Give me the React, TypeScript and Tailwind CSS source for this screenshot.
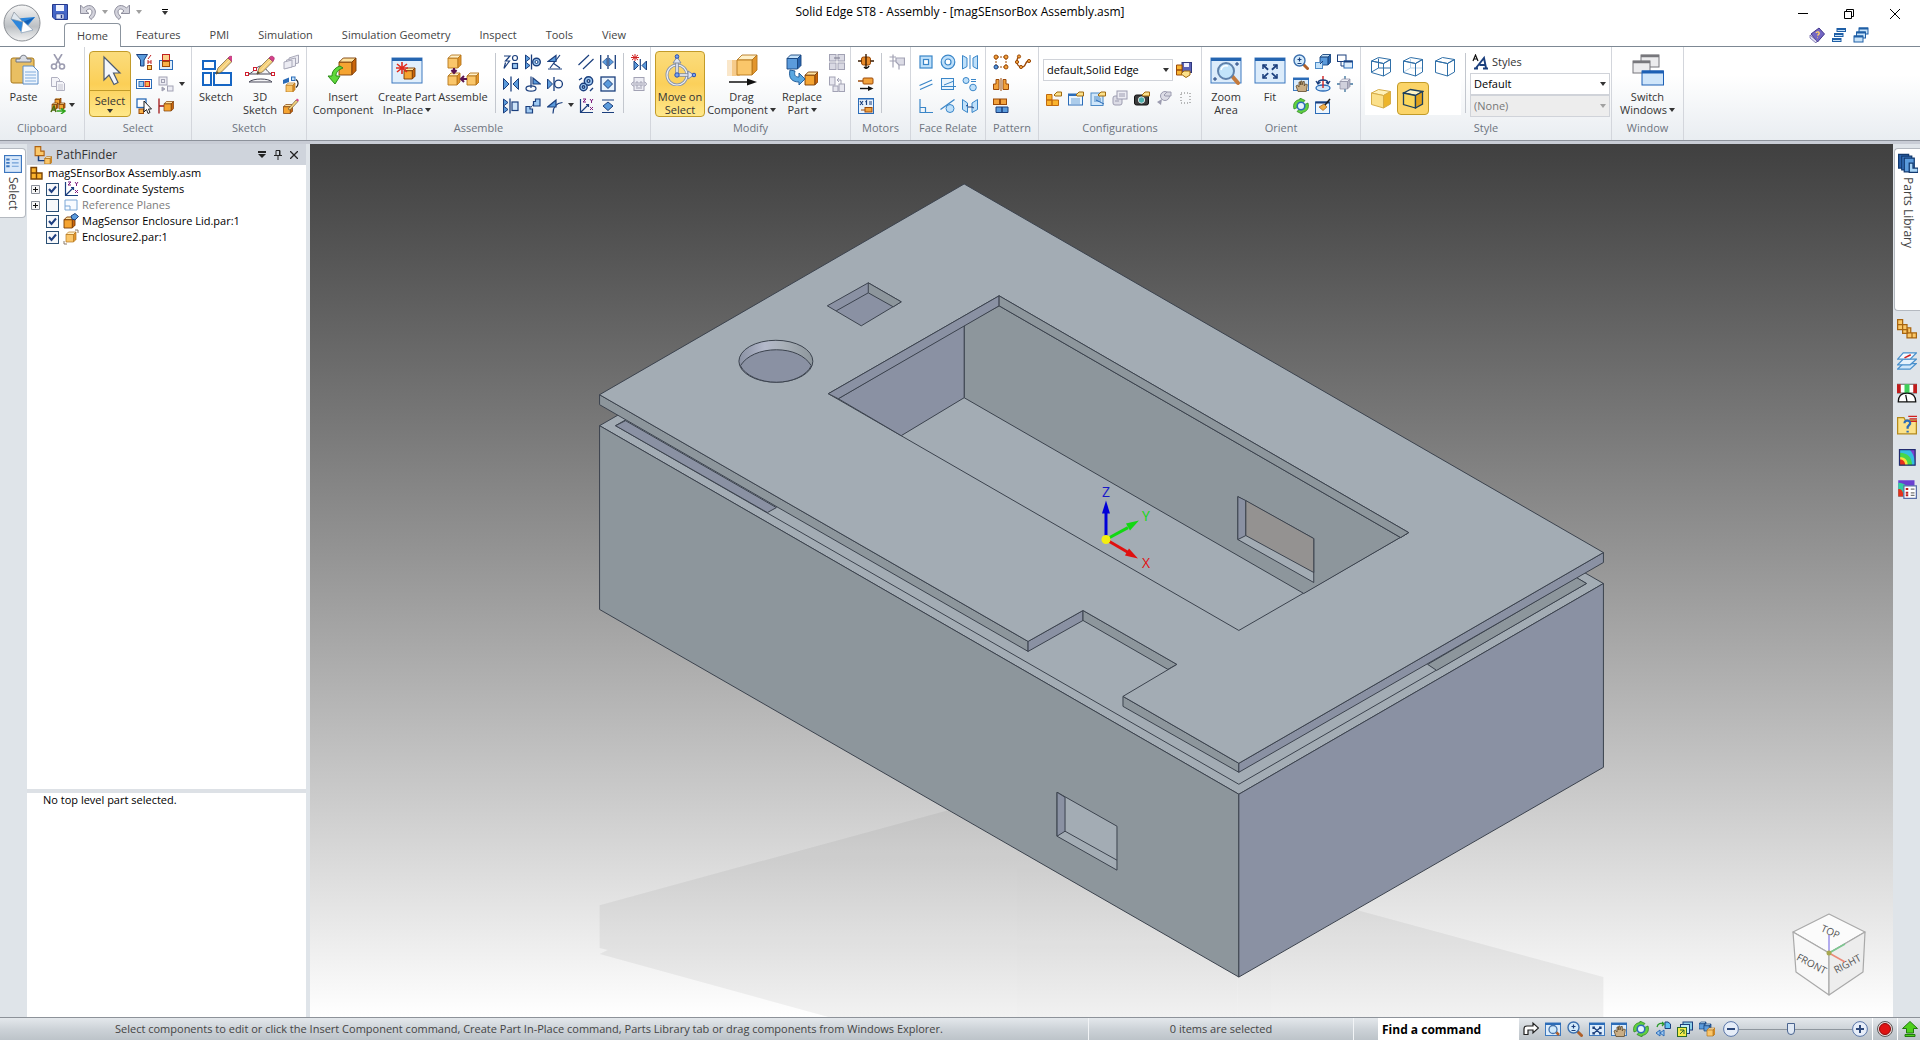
import type { ReactNode } from "react";

const NAVY = "#1b3f7d";
const BLUE = "#2b6cb8";
const SKY = "#bfe0fa";
const GRAY = "#9c9cb0";
const RUST = "#9c4a08";

type CubeProps = { x: number; y: number; s: number; tone?: "orange" | "gold" | "blue" | "gray" };

const tones = {
    orange: ["#ffe3a0", "#f5a431", "#c9660c", "#7c3c06"],
    gold: ["#fff0c8", "#fac66a", "#e2952c", "#b5761c"],
    blue: ["#c4e2fa", "#5b9bdc", "#2a66b0", "#17457f"],
    gray: ["#ededf4", "#d0d0dc", "#b3b3c4", "#8e8ea4"],
};

function Cube({ x, y, s, tone = "orange" }: CubeProps) {
    const [top, front, side, line] = tones[tone];
    const d = s * 0.25;
    const f = s - d;
    return (
        <g stroke={line} strokeWidth={s > 10 ? 0.9 : 0.7} strokeLinejoin="round">
            <path d={`M${x} ${y + d}l${d} ${-d}h${f}l${-d} ${d}z`} fill={top} />
            <path d={`M${x + f} ${y + d}l${d} ${-d}v${f}l${-d} ${d}z`} fill={side} />
            <path d={`M${x} ${y + d}h${f}v${f}h${-f}z`} fill={front} />
        </g>
    );
}

function Pencil({ x, y }: { x: number; y: number }) {
    return (
        <g transform={`translate(${x} ${y})`} stroke="#6d5a3a" strokeWidth="0.7">
            <path d="M0 17l2-6L12 1l4 3.500L5.500 15z" fill="#f4cf7a" />
            <path d="M12 1l1.500-1.500c2-1 4.500 1 3.500 3L16 4.500z" fill="#d6408c" stroke="#a02560" />
            <path d="M0 17l.8-2.600 1.800 1.500z" fill="#333" />
            <path d="M4 13.500L14 3" stroke="#fff0c0" />
        </g>
    );
}

const win = (
    <>
        <rect x="0.500" y="2" width="15" height="12.500" fill="#dcecfb" stroke="#3d79bf" />
        <path d="M0 3h16" stroke="#2b6cb8" strokeWidth="2" />
    </>
);
const tag = <path d="M8 5l3-3h4.500v4H9z" fill="#fbe08a" stroke="#a06a10" />;
const grayTag = <path d="M8 5l3-3h4v4H9z" fill="#d8d8e2" stroke={GRAY} />;

const glyphs: Record<string, ReactNode> = {
    save: (
        <>
            <path d="M.5 .5h15v15H3L.5 13z" fill="#4667c8" stroke="#26398c" />
            <rect x="4" y="1" width="8" height="6" fill="#f2f5ff" />
            <rect x="4" y="10" width="8" height="5" fill="#dfe5f8" stroke="#26398c" strokeWidth=".6" />
            <path d="M9.500 11v3" stroke="#26398c" strokeWidth="1.500" />
        </>
    ),
    undo: <path d="M.5 1v8.500H9L6 7c3-3.500 6-2 6 1 0 2-2 4-3 5l2 2.500c4-3 5-7 4-9.500C13 1 8 0 3.500 4z" fill="#d3d3dc" stroke="#8f8f9e" />,
    redo: <path d="M15.500 1v8.500H7L10 7C7 3.500 4 5 4 8c0 2 2 4 3 5l-2 2.500C1 12.500 0 8.500 1 6 3 1 8 0 12.500 4z" fill="#d3d3dc" stroke="#8f8f9e" />,
    help: (
        <>
            <path d="M2 7l8-6 5.500 6-7 8z" fill="#7467c4" stroke="#42368c" />
            <path d="M1 8v3l6 5 1-2z" fill="#e8e6f8" stroke="#42368c" strokeWidth=".6" />
            <path d="M7 6c1-2 4-1 3 1L8.500 8.500M8 10.500h.6" fill="none" stroke="#ffce66" strokeWidth="1.400" />
        </>
    ),
    stack: (
        <g fill="#c9e3f8" stroke="#1f5fa6">
            <rect x="6" y="1.500" width="8.500" height="3" />
            <rect x="3.500" y="6.500" width="8.500" height="3" />
            <rect x="1.500" y="11.500" width="8.500" height="3" />
            <path d="M6 2h9M3 7h9M1 12h9" strokeWidth="2" />
        </g>
    ),
    cascade: (
        <g fill="#c9e3f8" stroke="#1f5fa6">
            <rect x="6" y="1" width="9" height="6" />
            <rect x="3.500" y="5" width="9" height="6" />
            <rect x="1" y="9" width="9" height="6" />
            <path d="M6 1.500h9M3.500 5.500h9M1 9.500h9" strokeWidth="1.800" />
        </g>
    ),
    cut: (
        <g fill="none" stroke={GRAY} strokeWidth="1.600">
            <path d="M4 0l6 10M12 0L6 10" />
            <circle cx="4" cy="12.500" r="2.500" />
            <circle cx="12" cy="12.500" r="2.500" />
        </g>
    ),
    copy: (
        <g fill="#f4f4f8" stroke="#b0b0c0">
            <path d="M1.500 1.500h6l2 2v7h-8z" />
            <path d="M6.500 5.500h6l2 2v7h-8z" />
            <path d="M8 9h5M8 11h5M8 13h5" strokeWidth=".7" />
        </g>
    ),
    pasteRel: (
        <>
            <Cube x={5} y={0} s={6} />
            <Cube x={2} y={5} s={6} />
            <Cube x={9} y={5} s={6} />
            <path d="M1 14l3-6 2 6M2 12h4" fill="none" stroke="#4d6a12" strokeWidth="1.600" />
            <path d="M7 13h7M11 10.500l4 2.500-4 3" fill="none" stroke="#2fa51b" strokeWidth="1.500" />
        </>
    ),
    filter: (
        <>
            <path d="M.5 .5h11L8 6v6H4.500V6z" fill="#5b9bdc" stroke={NAVY} />
            <path d="M15 1l-3 4M12 6v4M15 6v4M12 8h3" stroke="#c02020" />
            <rect x="11.500" y="11.500" width="4" height="4" fill="#ffcf6a" stroke={RUST} />
        </>
    ),
    selBox: (
        <>
            <rect x="1.500" y="6.500" width="13" height="9" fill="#dcecfb" stroke={BLUE} />
            <rect x="4.500" y=".5" width="7" height="6" fill="#fbd08a" stroke="#c02020" />
            <rect x="4.500" y="7.500" width="7" height="5" fill="#f9b24a" stroke={RUST} />
        </>
    ),
    selRange: (
        <>
            <rect x="0.500" y="3.500" width="15" height="9" fill="none" stroke={BLUE} />
            <rect x="3" y="5.500" width="4.500" height="5" fill="#9ec9f2" stroke={BLUE} />
            <rect x="9" y="5.500" width="4.500" height="5" fill="#f9b24a" stroke="#c02020" />
        </>
    ),
    selGray: (
        <g fill="#ececf3" stroke="#a2a2b4">
            <rect x="1" y="1" width="8" height="8" />
            <rect x="3.500" y="3.500" width="3" height="3" />
            <rect x="9.500" y="10" width="5.500" height="5" />
            <path d="M4 11l3 2-3 2z" fill="#a2a2b4" />
        </g>
    ),
    selCursor: (
        <>
            <rect x="1" y="1" width="9" height="8.500" fill="#fff" stroke={BLUE} strokeWidth="1.300" />
            <rect x="3" y="11" width="4.500" height="4.500" fill="#f9b24a" stroke={RUST} />
            <path d="M8 3v11l2.500-2.500L12 15.500l2-1-1.500-3.500H15.500z" fill="#fff" stroke="#222" />
        </>
    ),
    selDim: (
        <>
            <path d="M1 .5v15M1 8h6" stroke="#a01818" strokeWidth="1.300" />
            <Cube x={6} y={3.5} s={9.5} />
        </>
    ),
    planes: (
        <g fill="#ececf3" stroke="#a8a8b8">
            <path d="M6 4l9.500-3v8L6 11z" />
            <path d="M3.500 6l9-2v8l-9 2z" />
            <path d="M1 8l8-2v7l-8 2z" />
        </g>
    ),
    projCube: (
        <>
            <Cube x={3} y={7} s={9} tone="gold" />
            <path d="M0 4l6-2.500v4.500L0 8z" fill="#2b6cb8" />
            <rect x="8.500" y="1" width="3.500" height="3.500" fill="#c4e2fa" stroke={BLUE} />
            <path d="M13 3.500c3 2 2.500 6 0 8" fill="none" stroke="#222" strokeWidth="1.200" />
        </>
    ),
    editCube: (
        <>
            <Cube x={0.5} y={6.5} s={9} />
            <path d="M5 11l8-9 2 1.500-8 8.500z" fill="#f4cf7a" stroke="#6d5a3a" strokeWidth=".7" />
            <path d="M13 2l1-1.500 2 1.500-1 1.600z" fill="#d6408c" />
        </>
    ),
    flash: (
        <g fill="none" stroke={NAVY} strokeWidth="1.200">
            <path d="M1 2h6L2.500 7h4L1 14.500l1.500-6" />
            <circle cx="12" cy="4" r="2.500" />
            <rect x="9.500" y="9.500" width="5" height="5" fill="#9ec9f2" />
        </g>
    ),
    axial: (
        <g stroke={NAVY}>
            <path d="M.5 1l4.500 3.500L.5 8zM.5 8L5 11.500.5 15z" fill="#5b9bdc" />
            <path d="M6.500 .5v15" strokeWidth="1.300" />
            <circle cx="11.500" cy="8" r="3.800" fill="#9ec9f2" strokeWidth="1.400" />
            <circle cx="11.500" cy="8" r="1.500" fill="#fff" />
        </g>
    ),
    angle: (
        <g stroke={NAVY} strokeWidth="1.200">
            <path d="M1 15h14M3 14L13 1M6 9l7 5" fill="none" />
            <path d="M1 7.500l8-6v6z" fill="#5b9bdc" />
        </g>
    ),
    mate: (
        <g stroke={NAVY}>
            <path d="M.5 2.500L6 8 .5 13.500zM15.500 2.500L10 8l5.500 5.500z" fill="#5b9bdc" />
            <path d="M8 .5v15" strokeWidth="1.300" />
        </g>
    ),
    insert: (
        <g stroke={NAVY} strokeWidth="1.200">
            <ellipse cx="6" cy="12.500" rx="5" ry="2.700" fill="none" />
            <path d="M6 12V.5" />
            <path d="M8 2l7.500 6H8z" fill="#5b9bdc" />
        </g>
    ),
    tangent: (
        <g stroke={NAVY}>
            <path d="M.5 3l5 5-5 5z" fill="#5b9bdc" />
            <path d="M7 1v14" strokeWidth="1.300" />
            <circle cx="11.500" cy="8" r="3.900" fill="none" strokeWidth="1.300" />
        </g>
    ),
    planar: (
        <g stroke={NAVY}>
            <path d="M.5 1l4.500 3.500L.5 8zM.5 8L5 11.500.5 15z" fill="#5b9bdc" />
            <path d="M7 .5v15" strokeWidth="1.300" />
            <rect x="9" y="4" width="6" height="8.500" fill="#cfe4f8" strokeWidth="1.200" />
        </g>
    ),
    rigid: (
        <g stroke={NAVY} fill="#9ec9f2" strokeWidth="1.200">
            <path d="M1 8.500h4v2.500h2.500v4H1zM8.500 3.500h2v-2.500h4.500v7H8.500z" />
            <path d="M6 9l3-3" strokeDasharray="1 1" />
        </g>
    ),
    path: (
        <g stroke={NAVY} strokeWidth="1.200">
            <path d="M6 15.500C6 8 10 5 15.500 4.500" fill="none" />
            <path d="M.5 9L9 2v7z" fill="#5b9bdc" />
        </g>
    ),
    parallel: <path d="M.5 11L11 1M5 15L15.500 5" stroke={NAVY} strokeWidth="1.200" />,
    gear: (
        <g stroke={NAVY} strokeWidth="1.400" fill="#9ec9f2">
            <circle cx="10.500" cy="5" r="4.200" />
            <circle cx="5.500" cy="11" r="3.700" />
            <circle cx="10.500" cy="5" r="1.400" fill="#fff" />
            <circle cx="5.500" cy="11" r="1.200" fill="#fff" />
            <path d="M1 4l3-2M12 15l3-3" />
        </g>
    ),
    csys: (
        <g strokeWidth="1.200" fill="none">
            <path d="M2.500 1v13.500H15M2.500 14.500l8-8M8 6.500h2.500V9" stroke={NAVY} />
            <path d="M5 1h3L5 4h3M12 1l1.500 2L15 1M13.500 3v2M12 9l3 3M15 9l-3 3" stroke="#7d1b7d" strokeWidth="1" />
        </g>
    ),
    center: (
        <g stroke={NAVY}>
            <path d="M.7 1v14M15.300 1v14M8 1v14" strokeWidth="1.300" />
            <path d="M7 4v8L2.500 8zM9 4v8l4.500-4z" fill="#5b9bdc" strokeWidth=".6" />
        </g>
    ),
    boxDiamond: (
        <>
            <rect x="1" y="1" width="14" height="14" fill="#eaf4fd" stroke={NAVY} strokeWidth="1.300" />
            <path d="M8 3.500l4.500 4.500L8 12.500 3.500 8z" fill="#5b9bdc" stroke={NAVY} />
        </>
    ),
    barDiamond: (
        <>
            <path d="M2 2h12M2 14.500h12" stroke={NAVY} strokeWidth="1.200" />
            <path d="M8 4l5 4-5 4.500L3 8z" fill="#5b9bdc" stroke={NAVY} />
        </>
    ),
    capture: (
        <>
            <path d="M4 0v7M1 1l6 5M7 1L1 6M0 3.500h8" stroke="#d02020" />
            <path d="M3 7l4.500 4.500L3 16zM15.500 7L11 11.500l4.500 4.500z" fill="#5b9bdc" stroke={NAVY} />
            <path d="M9.300 5v11" stroke={NAVY} strokeWidth="1.200" />
        </>
    ),
    grayGear: (
        <g fill="#ececf3" stroke="#a2a2b4">
            <ellipse cx="8" cy="8" rx="7.500" ry="3" />
            <rect x="3" y="1.500" width="10" height="13" />
            <path d="M5 6h2v4H5zM9 6h2v4H9zM5 12h6" />
        </g>
    ),
    grayGrid: (
        <g fill="#dadae4" stroke="#a2a2b4">
            <rect x=".5" y=".5" width="6.500" height="6.500" />
            <rect x="9" y=".5" width="6.500" height="6.500" />
            <rect x=".5" y="9" width="6.500" height="6.500" />
            <rect x="9" y="9" width="6.500" height="6.500" />
            <path d="M5 4h6" stroke="#77778a" />
        </g>
    ),
    grayMove: (
        <g fill="#e6e6ee" stroke="#a2a2b4">
            <rect x=".5" y="1" width="5.500" height="8" />
            <rect x="4" y="10" width="5" height="5.500" />
            <rect x="10" y="8" width="5.500" height="7.500" />
            <path d="M8 4h4v4M8 4l2-2M8 4l2 2" fill="none" />
        </g>
    ),
    rotMotor: (
        <>
            <rect x="3.500" y="3" width="9" height="8" rx="2" fill="#e88b2a" stroke={RUST} />
            <path d="M8 0v15M0 7h3.500M12.500 7H16" stroke="#3a1c02" strokeWidth="1.400" />
            <path d="M6 13c2 2 4 1 5-1" fill="none" stroke="#111" strokeWidth="1.500" />
        </>
    ),
    linMotor: (
        <>
            <rect x="5" y="2" width="10" height="6" rx="1" fill="#f2a23c" stroke={RUST} />
            <path d="M0 5h5" stroke={RUST} strokeWidth="1.500" />
            <path d="M2 12.500h9" stroke="#111" strokeWidth="1.400" />
            <path d="M10 10l5.500 2.500L10 15z" fill="#111" />
        </>
    ),
    varMotor: (
        <>
            <rect x=".5" y=".5" width="15" height="15" fill="#eaf2fc" stroke={BLUE} />
            <path d="M.5 1h15" stroke={BLUE} />
            <path d="M2 3l3 4M5 3L2 7M7.500 4l1-1v4M11 4h3M11 6h3" fill="none" stroke={NAVY} strokeWidth="1.200" />
            <rect x="7" y="9.500" width="7" height="4.500" fill="#f2a23c" stroke={RUST} />
            <path d="M3 12h4" stroke={RUST} />
        </>
    ),
    grayMotor: (
        <g fill="#dcdce6" stroke="#a2a2b4" strokeWidth="1.200">
            <path d="M7 4h8.500v7H10L7 8z" />
            <path d="M.5 3H7M.5 7H7M4 .5v13M10 11v4.500" />
        </g>
    ),
    frCoplanar: (
        <g fill={SKY} stroke="#3a86c8">
            <rect x="2" y="2" width="12" height="12" strokeWidth="1.200" />
            <rect x="5.500" y="5.500" width="5" height="5" fill="#fff" strokeWidth="1.200" />
        </g>
    ),
    frConc: (
        <g fill={SKY} stroke="#3a86c8" strokeWidth="1.200">
            <circle cx="8" cy="8" r="6.800" />
            <circle cx="8" cy="8" r="3" fill="#fff" />
        </g>
    ),
    frSym: (
        <g fill={SKY} stroke="#3a86c8">
            <path d="M.5 1.500L5 4v8.500L.5 15zM15.500 1.500L11 4v8.500l4.500 2.500zM8 1v14" />
        </g>
    ),
    frPar: <path d="M1.500 9.500L14 4M2 13.500L14.500 8" stroke="#3a86c8" strokeWidth="1.200" />,
    frOff: (
        <g fill="#e8f4fd" stroke="#3a86c8">
            <rect x="1.500" y="2.500" width="12" height="11" />
            <path d="M1.500 10.500H16M4 9l10-4" />
        </g>
    ),
    frEq: (
        <g fill={SKY} stroke="#3a86c8">
            <circle cx="4" cy="4.500" r="3" />
            <circle cx="11" cy="11.500" r="3.300" />
            <path d="M9 3.500h5M9 5.500h5" />
        </g>
    ),
    frPerp: <path d="M2 1v13.500h13M2 9.500h5.500v5" fill="none" stroke="#3a86c8" strokeWidth="1.200" />,
    frTan: (
        <g fill={SKY} stroke="#3a86c8">
            <circle cx="10" cy="10.500" r="4" />
            <path d="M.5 11.500L14.500 1.500" strokeWidth="1.300" />
        </g>
    ),
    frRigid: (
        <g fill={SKY} stroke="#3a86c8">
            <path d="M.5 1.500L5.500 5v9.500l-5-3zM10 5l5.500-3.500v10L10 14.500z" />
            <path d="M6 9h4M4 8l2-1M12 10l-2-1" stroke={NAVY} />
        </g>
    ),
    patRect: (
        <g stroke={RUST} fill="#f2a23c">
            <path d="M4 3h8M4 13h8M3 4v8M13 4v8" strokeDasharray="2 1" />
            <circle cx="3" cy="3" r="2" />
            <circle cx="13" cy="3" r="2" />
            <circle cx="13" cy="13" r="2" />
            <circle cx="3" cy="13" r="2" fill="#5b9bdc" stroke={NAVY} />
        </g>
    ),
    patCurve: (
        <g stroke={RUST} fill="#f2a23c">
            <path d="M4 2c-4 5-2 11 3 11s2-6 7-6" fill="none" strokeWidth="1.300" />
            <circle cx="4" cy="2.500" r="1.600" />
            <circle cx="2" cy="8" r="1.600" />
            <circle cx="6" cy="13" r="1.600" />
            <circle cx="14" cy="7" r="1.600" />
        </g>
    ),
    patMirror: (
        <g stroke={RUST} fill="#f2a23c">
            <path d="M.5 13.500V8H3V3.500h3v10zM15.500 13.500V8H13V3.500h-3v10z" />
            <path d="M8 2v13" />
        </g>
    ),
    patDup: (
        <g fill="#f2a23c" stroke={RUST}>
            <rect x=".5" y="1" width="6" height="5.500" />
            <rect x="7.500" y="1" width="6" height="5.500" />
            <path d="M3 9h6v5.500H3zM9 9h6v5.500H9z" fill="#5b9bdc" stroke={NAVY} />
        </g>
    ),
    cfgSave: (
        <>
            <rect x="6" y=".5" width="9.500" height="10" fill="#5a62b8" stroke="#30387c" />
            <rect x="8" y="1" width="5" height="4" fill="#eef" />
            <path d="M.5 3H6v5H.5zM.5 8H6v5H.5z" fill="#f9b533" stroke={RUST} />
            <path d="M5 12l3-3h6v4l-4 2.500z" fill="#fbe08a" stroke="#a06a10" />
        </>
    ),
    cfg1: (
        <>
            <path d="M.5 4.500H6V10H.5zM.5 10H6v5.500H.5zM6 10h6.500v5.500H6z" fill="#fbb42e" stroke="#c06a10" />
            {tag}
        </>
    ),
    cfg2: (
        <>
            <rect x=".5" y="4" width="14" height="11" fill="#eaf4fd" stroke={BLUE} />
            <path d="M.5 5h14" stroke={BLUE} strokeWidth="2" />
            <path d="M3 9h9M3 11h9M3 13h9" stroke="#6fa4d8" />
            {tag}
        </>
    ),
    cfg3: (
        <>
            <rect x="1" y="3" width="12" height="12.500" fill="#cfe6fa" stroke="#4d8ac6" />
            <path d="M4 7h6M4 9h7M4 11h7" stroke="#4d8ac6" />
            <path d="M6 10l8 4" stroke={BLUE} />
            {tag}
        </>
    ),
    cfg4: (
        <>
            <rect x="1" y="6" width="9" height="9" rx="2" fill="#dcdce6" stroke={GRAY} />
            <rect x="5" y="1" width="10" height="8" fill="#ececf3" stroke={GRAY} />
            <path d="M7 4h6M7 6h6M3 11h4" stroke={GRAY} />
        </>
    ),
    cfg5: (
        <>
            <rect x=".5" y="5" width="14" height="10" rx="2" fill="#3c3c3c" stroke="#111" />
            <circle cx="7.500" cy="10" r="3.200" fill="#4fb3b0" stroke="#ddd" />
            {tag}
        </>
    ),
    cfg6: (
        <>
            <circle cx="9" cy="6" r="4.500" fill="#dcdce6" stroke={GRAY} />
            <path d="M6 9l-5 3 4 3z" fill={GRAY} />
            {grayTag}
        </>
    ),
    cfg7: <rect x="3" y="3" width="9" height="10" fill="none" stroke="#777" strokeDasharray="1 2" />,
    zoom: (
        <>
            <path d="M10.500 10.500l4 4" stroke="#b0602a" strokeWidth="3" strokeLinecap="round" />
            <circle cx="6.500" cy="6.500" r="5.500" fill="#d4ebfb" stroke="#3b6fae" strokeWidth="1.400" />
            <path d="M4.500 5.500h4M6.500 3.500v4M4.500 9.500h4" stroke={NAVY} strokeWidth="1.200" />
        </>
    ),
    zoomWin: (
        <>
            {win}
            <path d="M11 11l3 3" stroke="#b0602a" strokeWidth="2.500" />
            <circle cx="8" cy="8.500" r="4" fill="#cfe9fb" stroke="#4573ab" strokeWidth="1.300" />
        </>
    ),
    fitWin: (
        <>
            {win}
            <path d="M4 6l8 7M12 6l-8 7M4 8V6h2M10 6h2v2M4 11v2h2M10 13h2v-2" fill="none" stroke={NAVY} strokeWidth="1.200" />
        </>
    ),
    lookAt: (
        <>
            <Cube x={5} y={0.5} s={10.5} tone="blue" />
            <rect x=".5" y="8.500" width="7" height="6" fill="#c4e2fa" stroke="#4d8ac6" />
            <path d="M5 10l3-3" stroke={NAVY} />
        </>
    ),
    prevView: (
        <g fill="#fff" stroke={NAVY}>
            <rect x=".5" y="1" width="8.500" height="6.500" />
            <rect x="7" y="7" width="8.500" height="7" fill="#dcecfb" stroke={BLUE} />
            <path d="M7 7.500h8.500" strokeWidth="2" />
            <path d="M4 8v4h3" fill="none" />
        </g>
    ),
    pan: (
        <>
            {win}
            <path d="M5 15.500L3 10l1.500-1L6 11V6h1.300v3l.5-4H9v4l1-3.500h1.300V10l1-2 2 .5-1 7z" fill="#c9ad84" stroke="#5f4a2c" strokeWidth=".8" />
        </>
    ),
    spin: (
        <>
            <ellipse cx="8" cy="12" rx="7" ry="3" fill="#cfe6fa" stroke={BLUE} strokeWidth="1.300" />
            <path d="M8 0v12" stroke="#d02020" strokeWidth="1.400" />
            <path d="M3 7c0-4 10-4 10 0M1 5l2 3 2.500-2M15 5l-2 3-2-2" fill="none" stroke={NAVY} strokeWidth="1.300" />
        </>
    ),
    views: (
        <>
            <path d="M8 0v16M0 8h16" stroke="#6f97b6" strokeWidth="1.800" />
            <Cube x={3} y={3} s={10} tone="gray" />
        </>
    ),
    orbit: (
        <>
            <path d="M1 11C-.5 6 2 2 7 1.500V0l5 2.500-4 4V5C5 5.500 4 7 4.500 9.500z" fill="#62d23e" stroke="#23801a" strokeWidth=".7" />
            <path d="M15 5c1.500 5-1 9-6 9.500V16l-5-2.500 4-4V11c3-.5 4-2 3.500-4.500z" fill="#62d23e" stroke="#23801a" strokeWidth=".7" />
            <circle cx="8" cy="8" r="3.800" fill="#e6f3fd" stroke={BLUE} strokeWidth="1.600" />
        </>
    ),
    sharpen: (
        <>
            <rect x=".5" y="4" width="14" height="11.500" fill="#eef6fd" stroke={BLUE} />
            <path d="M.5 4.500h14" stroke={NAVY} strokeWidth="2" />
            <path d="M4 9l4 3.500L12 9 9 6z" fill="#f0b046" stroke={RUST} strokeWidth=".6" />
            <path d="M10 7l5-6" stroke="#222" strokeWidth="1.500" />
        </>
    ),
    styles: (
        <g fill="none" stroke={NAVY}>
            <path d="M1 7l2.500-6L6 7M2 5h3" strokeWidth="1.200" stroke="#111" />
            <path d="M4 14L12 4l2 10M7.500 11h6M2 14.500h4M11 14.500h5" strokeWidth="1.900" />
        </g>
    ),
    pathfinder: (
        <>
            <path d="M4 7v6h6" fill="none" stroke={NAVY} strokeWidth="1.300" />
            <path d="M1 .5h5v4h3v4H1z" fill="#fbc86a" stroke="#b06210" />
            <Cube x={9.5} y={9.5} s={6.5} tone="gold" />
        </>
    ),
    asm: (
        <>
            <path d="M2 2.500h5.500V8H13v6H2z" fill="#fbb42e" stroke="#7a4305" strokeWidth="1.400" />
            <path d="M2 8h5.500v6" fill="none" stroke="#7a4305" strokeWidth="1.400" />
        </>
    ),
    refPlane: (
        <g fill="none" stroke="#7aa6d6">
            <path d="M2 3h12v10H2z" fill="#f8fbff" />
            <path d="M2 9h5v4" />
        </g>
    ),
    partPin: (
        <>
            <Cube x={1} y={4} s={11} tone="orange" />
            <path d="M8 3l4-2.500 3.500 3L12 7l-3-1z" fill="#5b9bdc" stroke={NAVY} />
        </>
    ),
    part: (
        <>
            <Cube x={3} y={3} s={10} tone="gold" />
            <path d="M1 12v3h3M12 1h3v3" fill="none" stroke="#8a7a6a" />
        </>
    ),
    selectPane: (
        <>
            <rect x="0.500" y="0.500" width="15" height="15" fill="#d8e8fa" stroke="#3c76be" />
            <path d="M2 4h3M2 7h3M2 10h3" stroke="#3c76be" strokeWidth="1.600" />
            <path d="M7 4h6M7 7h6M7 10h6" stroke="#6f9ed6" />
        </>
    ),
    library: (
        <g stroke="#123a70">
            <path d="M0.500 1h8v11h-8z" fill="#2b62ac" />
            <path d="M3 2.500h8v11H3z" fill="#3d7cc8" />
            <path d="M5 4h8v11H5z" fill="#5b9bdc" />
            <path d="M9 8h3v4h4v3.500H9z" fill="#a8d4f6" />
        </g>
    ),
    family: (
        <g fill="#fbc868" stroke="#a86510">
            <path d="M.5 .5h4v4h-4zM.5 4.500h4v4h-4zM4.500 4.500h3.500v4H4.500zM4.500 8.500h4v3h-4zM8 7h3v4H8zM8 11h4v4H8zM12 11h3.500v4H12z" />
        </g>
    ),
    layers: (
        <g stroke="#4a90cc">
            <path d="M5 10h10.500l-5 4.500H.5z" fill="#cfe6fa" />
            <path d="M5 6.500h10.500l-5 4.500H.5z" fill="#e4f1fc" />
            <path d="M5 1.500h10.500l-5 5H.5z" fill="#f6fbff" />
            <path d="M6 5.500l5-2.500" stroke="#d02020" strokeWidth="1.300" />
        </g>
    ),
    gauge: (
        <>
            <path d="M0 1h16v7H0z" fill="#fff" stroke="#333" strokeWidth=".6" />
            <path d="M0 1h3v7H0zM13 1h3v7h-3z" fill="#c01c1c" />
            <path d="M6 1h4v7H6z" fill="#3fd05a" />
            <path d="M1 15c0-5 3-7 7-7s7 2 7 7zM8 15L7 9.500" fill="#fff" stroke="#111" />
        </>
    ),
    folderHelp: (
        <>
            <path d="M0.500 2h5l1 2h9v11H0.500z" fill="#fbe28a" stroke="#b48a1c" />
            <path d="M9 1h7M10 3h6M10 5h6" stroke="#d02020" />
            <path d="M6 6.500c0-3 5-2.500 4.500.5L8.500 9.500V11M8.500 12.500v1.500" fill="none" stroke={BLUE} strokeWidth="1.800" />
        </>
    ),
    heat: (
        <>
            <path d="M2 2h12.500v12.500H2z" fill="#7a3fd0" />
            <path d="M2 2h8c3 3 4.500 8 4.500 12.500H2z" fill="#35bde0" />
            <path d="M2 4.500c7 0 10 4 10 10H2z" fill="#46d848" />
            <path d="M2 8c5 0 6.500 3 6.500 6.500H2z" fill="#f6e23a" />
            <path d="M2 10c3 0 4.500 1.500 4.500 4.500H2z" fill="#e6301c" />
            <path d="M2 2h12.500v12.500H2z" fill="none" stroke="#222c70" />
        </>
    ),
    heatDoc: (
        <>
            <path d="M1 1h13v13H1z" fill="#6a3fd0" />
            <path d="M1 3c6 0 9 4 9 11H1z" fill="#35d0a0" />
            <path d="M1 8c3 0 4 2 4 6H1z" fill="#e6301c" />
            <path d="M5.500 5.500h10v10h-10z" fill="#fff" stroke="#5a6fa8" />
            <path d="M7 8h2M7 11h2M7 13h2" stroke="#c01c1c" strokeWidth="1.500" />
            <path d="M11 8h3M11 11h3M11 13h3" stroke="#777" />
        </>
    ),
    repeat: <path d="M1 13.500V8c0-2 1-3 3-3h6V2l5.500 5-5.500 5V9H5v4.500z" fill="#fff" stroke="#222" strokeWidth="1.200" />,
    rotDoc: (
        <>
            <path d="M2 6c1-4 4-4 6-3M7 1l2 2-2 2" fill="none" stroke="#2b9a2b" strokeWidth="1.300" />
            <path d="M10 1h3l2.500 2v4.500H10z" fill="#5fc0f0" stroke={NAVY} />
            <path d="M1 12l4-3v6zM9 9l-4 3 4 3z" fill="#9ec9f2" stroke={BLUE} />
        </>
    ),
    viewStyles: (
        <>
            <rect x="6" y="1" width="9.500" height="8" fill="#8fd0e8" stroke={NAVY} />
            <rect x="3.500" y="3.500" width="9" height="9" fill="#c4ecf6" stroke={NAVY} />
            <rect x=".5" y="6.500" width="9" height="9" fill="#f4ea4a" stroke="#2a6a2a" />
            <path d="M3 13l4-4M3 9h4v4" stroke="#2a6a2a" fill="none" />
        </>
    ),
    twoCubes: (
        <>
            <Cube x={0} y={1} s={7} tone="blue" />
            <Cube x={5} y={3} s={7} tone="blue" />
            <Cube x={8} y={7} s={8} tone="gold" />
        </>
    ),
    record: (
        <>
            <circle cx="8" cy="8" r="7.500" fill="#e8dada" stroke="#5a5a5a" />
            <circle cx="8" cy="8" r="5.500" fill="#e01212" stroke="#8e0808" />
        </>
    ),
    up: <path d="M8 .5l7.500 7h-4V12h-7V7.500H.5zM3 13.500h10v2H3z" fill="#4ed01c" stroke="#237a10" />,
    minus: (
        <>
            <circle cx="8" cy="8" r="7.400" fill="#e6edf8" stroke="#5a76a8" />
            <path d="M4 8h8" stroke="#2f4a7c" strokeWidth="2" />
        </>
    ),
    plus: (
        <>
            <circle cx="8" cy="8" r="7.400" fill="#e6edf8" stroke="#5a76a8" />
            <path d="M4 8h8M8 4v8" stroke="#2f4a7c" strokeWidth="2" />
        </>
    ),
};

const bigGlyphs: Record<string, ReactNode> = {
    paste: (
        <>
            <rect x="3" y="4" width="23" height="25" rx="2" fill="#e9bf62" stroke="#a8791c" />
            <path d="M8 8V5h4c0-5 7-5 7 0h4v3z" fill="#d8dce4" stroke="#70757f" />
            <path d="M15 12h10l5 5v13H15z" fill="#eef5fd" stroke="#5b8cc6" />
            <path d="M17 18h11M17 21h11M17 24h11M17 27h11" stroke="#7eabdd" />
        </>
    ),
    select: <path d="M10 2v23l5-5 5 9.500 4-2L19.500 18H26z" fill="#f4f7fb" stroke="#4c5a70" strokeWidth="1.200" />,
    sketch: (
        <>
            <g fill="none" stroke="#1666c4" strokeWidth="2">
                <rect x="3" y="7" width="12" height="8" />
                <rect x="3" y="19" width="8" height="12" />
                <rect x="14" y="19" width="17" height="12" />
            </g>
            <Pencil x={16} y={3} />
        </>
    ),
    sketch3d: (
        <>
            <path d="M3 20c5 1 9-8 14-8s6 8 12 8zM5 28c4-4 20-4 23 0z" fill="#f4f4f6" stroke="#4a4a5a" />
            <g fill="#fff" stroke="#d02030">
                <rect x="1.500" y="18.500" width="3" height="3" />
                <rect x="9.500" y="13.500" width="3" height="3" />
                <rect x="27.500" y="18.500" width="3" height="3" />
            </g>
            <Pencil x={13} y={3} />
        </>
    ),
    insertComp: (
        <>
            <Cube x={12} y={4} s={17} />
            <path d="M13 12c-6 2-8 6-8 10H1l7 8 5-8H9c0-4 2-6 7-8z" fill="#5fd83a" stroke="#2a8a18" />
        </>
    ),
    createPart: (
        <>
            <rect x="1" y="4" width="30" height="25" fill="#e1effc" stroke="#3d79bf" />
            <path d="M1 5.500h30" stroke="#2565b0" strokeWidth="3" />
            <Cube x={13} y={14} s={11} />
            <path d="M11 8v12M6 10l10 8M16 10L6 18M5 14h12" stroke="#e02a1c" strokeWidth="1.600" />
        </>
    ),
    assemble: (
        <>
            <Cube x={1} y={1} s={13} tone="gold" />
            <Cube x={1} y={19} s={12} tone="gold" />
            <Cube x={20} y={19} s={12} tone="gold" />
            <path d="M7 14v5M4.500 16l2.500 3 2.500-3M20 25h-6M17 22l-3 3 3 3" fill="none" stroke="#5a1450" strokeWidth="2" />
        </>
    ),
    move: (
        <>
            <circle cx="13" cy="21" r="10" fill="none" stroke="#8c96aa" strokeWidth="3" />
            <circle cx="13" cy="21" r="10" fill="none" stroke="#eef1f6" strokeWidth="1.200" />
            <path d="M13 3v18h17" fill="none" stroke="#7f8aa4" strokeWidth="3.500" />
            <path d="M13 3v18h17" fill="none" stroke="#f2f5fa" strokeWidth="1.500" />
            <path d="M9 9l4-6 4 6zM24 17l6 4-6 4z" fill="#dfe5f0" stroke="#7f8aa4" />
            <g fill="#7aa6f0" stroke="#2c4fae">
                <circle cx="13" cy="2.500" r="1.800" />
                <circle cx="30" cy="21" r="1.800" />
                <circle cx="13" cy="21" r="2.200" />
            </g>
        </>
    ),
    drag: (
        <>
            <path d="M1 6h12v16H1z" fill="#f6cf95" opacity=".5" />
            <path d="M6 6h8v16H6z" fill="#f3b961" opacity=".6" />
            <Cube x={11} y={1} s={20} tone="gold" />
            <path d="M3 28h20" stroke="#111" strokeWidth="1.500" />
            <path d="M21 24.500l10 3.500-10 3.500z" fill="#111" />
        </>
    ),
    replace: (
        <>
            <Cube x={1} y={1} s={14} tone="blue" />
            <Cube x={19} y={18} s={13} />
            <path d="M4 16c-2 9 3 12 9 12v3l6-6-6-6v4c-4 0-5-2-4-6z" fill="#5aa7e0" stroke="#235f9c" />
        </>
    ),
    zoomArea: (
        <>
            <rect x="1" y="4" width="30" height="25" fill="#dcecfb" stroke="#3d79bf" />
            <path d="M1 5.500h30" stroke="#2565b0" strokeWidth="3" />
            <path d="M22 22l6 7" stroke="#c47a3c" strokeWidth="4" strokeLinecap="round" />
            <circle cx="16" cy="17" r="8" fill="#c2e4fa" stroke="#5f82ac" strokeWidth="2" />
            <path d="M11 16c1-4 4-5 7-4" fill="none" stroke="#fff" strokeWidth="1.500" />
            <path d="M27 8v4M25 10h4M5 23v4M3 25h4" stroke={NAVY} />
        </>
    ),
    fit: (
        <>
            <rect x="1" y="4" width="30" height="25" fill="#dcecfb" stroke="#3d79bf" />
            <path d="M1 5.500h30" stroke="#2565b0" strokeWidth="3" />
            <path d="M9 11l14 13M23 11L9 24" stroke="#1b3f7d" strokeWidth="1.800" strokeDasharray="7 5 7" />
            <path d="M9 15v-4h4M19 11h4v4M9 20v4h4M19 24h4v-4" fill="none" stroke="#1b3f7d" strokeWidth="1.500" />
        </>
    ),
    switchWin: (
        <>
            <g fill="#ececee" stroke="#77777c">
                <rect x="9" y="1" width="18" height="12" />
                <rect x="1" y="7" width="17" height="12" />
                <path d="M9 2h18M1 8h17" strokeWidth="2.500" />
            </g>
            <rect x="10" y="17" width="21.500" height="14" fill="#cfe5fa" stroke="#1c5fb4" />
            <path d="M10 18h21.500" stroke="#1c5fb4" strokeWidth="3" />
        </>
    ),
};

function Icon({ name, size = "h-4 w-4" }: { name: string; size?: string }) {
    return (
        <svg viewBox="0 0 16 16" className={`shrink-0 ${size}`} aria-hidden="true">
            {glyphs[name]}
        </svg>
    );
}

function BigIcon({ name }: { name: string }) {
    return (
        <svg viewBox="0 0 32 32" className="h-8 w-8 shrink-0" aria-hidden="true">
            {bigGlyphs[name]}
        </svg>
    );
}

function Caret({ faded = false }: { faded?: boolean }) {
    return (
        <svg viewBox="0 0 6 4" className="inline-block h-1 w-1.5 shrink-0" aria-hidden="true">
            <path d="M0 0h6L3 4z" fill={faded ? "#a0a0a0" : "#333"} />
        </svg>
    );
}

function IconButton({ name }: { name: string }) {
    return (
        <button aria-label={name} className="flex h-[22px] w-[22px] shrink-0 items-center justify-center hover:bg-amber-100">
            <Icon name={name} />
        </button>
    );
}

function IconColumn({ names }: { names: string[] }) {
    return (
        <div className="flex flex-col">
            {names.map((name) => (
                <IconButton key={name} name={name} />
            ))}
        </div>
    );
}

function BigButton({ icon, lines, width, caret = false, active = false }: {
    icon: string;
    lines: string[];
    width: string;
    caret?: boolean;
    active?: boolean;
}) {
    const look = active
        ? "rounded-sm border border-[#c29b29] bg-linear-to-b from-[#fbdc7c] via-[#fbd05a] to-[#ffe88a]"
        : "border border-transparent";

    return (
        <button className={`flex h-[66px] shrink-0 flex-col items-center pt-0.5 ${width} ${look}`}>
            <BigIcon name={icon} />
            <span className="mt-1 flex flex-col text-center leading-[13px] whitespace-nowrap">
                {lines.map((line, i) => (
                    <span key={line} className="flex items-center justify-center gap-0.5">
                        {line}
                        {caret && i === lines.length - 1 && <Caret />}
                    </span>
                ))}
            </span>
        </button>
    );
}

function Group({ label, width, children }: { label: string; width: string; children: ReactNode }) {
    return (
        <section className={`flex shrink-0 flex-col border-r border-[#d3d6dc] ${width}`}>
            <div className="flex h-[70px] pt-1">{children}</div>
            <h2 className="text-center leading-[22px] text-[#6d7480]">{label}</h2>
        </section>
    );
}

function Divider() {
    return <div className="mx-1 mt-0.5 h-[60px] w-px shrink-0 bg-[#c3c7ce]" />;
}

function Combo({ label, value, className, disabled = false }: {
    label: string;
    value: string;
    className: string;
    disabled?: boolean;
}) {
    return (
        <label className={`relative flex items-center ${className}`}>
            <select
                aria-label={label}
                disabled={disabled}
                className="h-full w-full appearance-none border border-[#d0d3d9] bg-white px-[3px] text-black disabled:bg-[#ededed] disabled:text-[#777]">
                <option>{value}</option>
            </select>
            <span className="pointer-events-none absolute right-1 flex">
                <Caret faded={disabled} />
            </span>
        </label>
    );
}

function TitleBar() {
    return (
        <header className="flex h-[23px] items-center text-black">
            <div className="flex flex-1 items-center">
                <button aria-label="Save" className="ml-[52px]"><Icon name="save" /></button>
                <button aria-label="Undo" className="ml-3 flex items-center gap-1.5"><Icon name="undo" /><Caret faded /></button>
                <button aria-label="Redo" className="ml-1.5 flex items-center gap-1.5"><Icon name="redo" /><Caret faded /></button>
                <button aria-label="Customize" className="ml-5 flex flex-col gap-px">
                    <span className="h-px w-1.5 bg-black" />
                    <Caret />
                </button>
            </div>
            <h1 className="text-[12px]">Solid Edge ST8 - Assembly - [magSEnsorBox Assembly.asm]</h1>
            <div className="flex flex-1 justify-end pt-1">
                <button aria-label="Minimize" className="flex h-4 w-[46px] items-center justify-center">
                    <span className="h-px w-2.5 bg-black" />
                </button>
                <button aria-label="Restore" className="flex h-4 w-[46px] items-center justify-center">
                    <svg viewBox="0 0 10 10" className="h-2.5 w-2.5" fill="none" stroke="#000">
                        <path d="M.5 2.500h7v7h-7zM2.500 2.500v-2h7v7h-2" />
                    </svg>
                </button>
                <button aria-label="Close" className="mr-0.5 flex h-4 w-[46px] items-center justify-center">
                    <svg viewBox="0 0 10 10" className="h-2.5 w-2.5" stroke="#000">
                        <path d="M0 0l10 10M10 0L0 10" />
                    </svg>
                </button>
            </div>
        </header>
    );
}

const tabs = ["Features", "PMI", "Simulation", "Simulation Geometry", "Inspect", "Tools", "View"];

function TabRow() {
    return (
        <nav className="flex h-6 items-end gap-px border-b border-[#7d8894] pl-16 text-[#444]">
            <button className="-mb-px h-6 w-[57px] rounded-t-sm border border-b-0 border-[#8b949e] bg-white pt-0.5">Home</button>
            {tabs.map((tab) => (
                <button key={tab} className="h-[23px] px-3.5 pt-0.5">{tab}</button>
            ))}
            <div className="ml-auto flex h-full items-center gap-1.5 pr-[51px]">
                <button aria-label="Help"><Icon name="help" /></button>
                <button aria-label="Tile"><Icon name="stack" /></button>
                <button aria-label="Cascade"><Icon name="cascade" /></button>
            </div>
        </nav>
    );
}

function StyleBox({ hidden, shaded = false }: { hidden?: string; shaded?: boolean }) {
    const line = shaded ? "#d6ad48" : "#2f6fa8";
    return (
        <svg viewBox="0 0 22 22" className="h-[22px] w-[22px]" fill="none" stroke={line} aria-hidden="true">
            {hidden && <path d="M1.500 16l7-4h12M8.500 12V2.500" stroke={hidden} />}
            <path d="M1.500 5l7-3.500 12 2-7 4z" fill={shaded ? "#fff1b8" : "none"} />
            <path d="M1.500 5l12 2.500V20l-12-3.500z" fill={shaded ? "#fbe08a" : "none"} />
            <path d="M13.500 7.500l7-4V16l-7 4z" fill={shaded ? "#ecb52c" : "none"} />
        </svg>
    );
}

function Ribbon() {
    return (
        <div className="flex h-[94px] border-b border-[#8d929b] bg-linear-to-b from-white from-30% to-[#e9edf1] text-[#333]">
            <Group label="Clipboard" width="w-[85px]">
                <BigButton icon="paste" lines={["Paste"]} width="w-[47px]" />
                <IconColumn names={["cut", "copy", "pasteRel"]} />
                <div className="flex h-[66px] items-end pb-2.5"><Caret /></div>
            </Group>
            <Group label="Select" width="w-[107px]">
                <button className="ml-1 flex h-[66px] w-[42px] shrink-0 flex-col items-center rounded-sm border border-[#c29b29] bg-linear-to-b from-[#fbdc7c] via-[#fbcf56] to-[#ffe88a]">
                    <span className="flex h-[39px] w-full items-center justify-center border-b border-[#c29b29]">
                        <BigIcon name="select" />
                    </span>
                    <span className="pt-0.5 leading-4">Select</span>
                    <Caret />
                </button>
                <div className="w-0.5" />
                <IconColumn names={["filter", "selRange", "selCursor"]} />
                <IconColumn names={["selBox", "selGray", "selDim"]} />
                <div className="flex h-[66px] items-center pl-0.5"><Caret /></div>
            </Group>
            <Group label="Sketch" width="w-[115px]">
                <BigButton icon="sketch" lines={["Sketch"]} width="w-[48px]" />
                <BigButton icon="sketch3d" lines={["3D", "Sketch"]} width="w-[40px]" />
                <IconColumn names={["planes", "projCube", "editCube"]} />
            </Group>
            <Group label="Assemble" width="w-[344px]">
                <BigButton icon="insertComp" lines={["Insert", "Component"]} width="w-[72px]" />
                <BigButton icon="createPart" lines={["Create Part", "In-Place"]} width="w-[56px]" caret />
                <BigButton icon="assemble" lines={["Assemble"]} width="w-[56px]" />
                <Divider />
                <IconColumn names={["flash", "mate", "planar"]} />
                <IconColumn names={["axial", "insert", "rigid"]} />
                <IconColumn names={["angle", "tangent", "path"]} />
                <div className="flex h-[66px] w-3 items-end pb-2.5 pl-0.5"><Caret /></div>
                <IconColumn names={["parallel", "gear", "csys"]} />
                <IconColumn names={["center", "boxDiamond", "barDiamond"]} />
                <Divider />
                <IconColumn names={["capture", "grayGear"]} />
            </Group>
            <Group label="Modify" width="w-[200px]">
                <div className="w-1" />
                <BigButton icon="move" lines={["Move on", "Select"]} width="w-[50px]" active />
                <BigButton icon="drag" lines={["Drag", "Component"]} width="w-[73px]" caret />
                <BigButton icon="replace" lines={["Replace", "Part"]} width="w-[48px]" caret />
                <IconColumn names={["grayGrid", "grayMove"]} />
            </Group>
            <Group label="Motors" width="w-[60px]">
                <div className="w-1" />
                <IconColumn names={["rotMotor", "linMotor", "varMotor"]} />
                <Divider />
                <IconColumn names={["grayMotor"]} />
            </Group>
            <Group label="Face Relate" width="w-[75px]">
                <div className="w-1" />
                <IconColumn names={["frCoplanar", "frPar", "frPerp"]} />
                <IconColumn names={["frConc", "frOff", "frTan"]} />
                <IconColumn names={["frSym", "frEq", "frRigid"]} />
            </Group>
            <Group label="Pattern" width="w-[53px]">
                <div className="w-1" />
                <IconColumn names={["patRect", "patMirror", "patDup"]} />
                <IconColumn names={["patCurve"]} />
            </Group>
            <Group label="Configurations" width="w-[163px]">
                <div className="flex flex-col pt-2 pl-1">
                    <div className="flex items-center">
                        <Combo label="Configuration" value="default,Solid Edge" className="h-[22px] w-[130px]" />
                        <IconButton name="cfgSave" />
                    </div>
                    <div className="flex pt-1.5">
                        {["cfg1", "cfg2", "cfg3", "cfg4", "cfg5", "cfg6", "cfg7"].map((name) => (
                            <IconButton key={name} name={name} />
                        ))}
                    </div>
                </div>
            </Group>
            <Group label="Orient" width="w-[159px]">
                <BigButton icon="zoomArea" lines={["Zoom", "Area"]} width="w-[48px]" />
                <BigButton icon="fit" lines={["Fit"]} width="w-[40px]" />
                <IconColumn names={["zoom", "pan", "orbit"]} />
                <IconColumn names={["lookAt", "spin", "sharpen"]} />
                <IconColumn names={["prevView", "views"]} />
            </Group>
            <Group label="Style" width="w-[251px]">
                <div className="ml-1 grid h-16 w-24 shrink-0 grid-cols-3 bg-white">
                    <button aria-label="Wire frame" className="flex items-center justify-center"><StyleBox hidden="#2f6fa8" /></button>
                    <button aria-label="Hidden edges" className="flex items-center justify-center"><StyleBox hidden="#b9d3e8" /></button>
                    <button aria-label="Visible edges" className="flex items-center justify-center"><StyleBox /></button>
                    <button aria-label="Shaded" className="flex items-center justify-center"><StyleBox shaded /></button>
                    <button aria-label="Shaded with edges" className="flex items-center justify-center rounded-sm border border-[#c29b29] bg-[#fbd468]">
                        <svg viewBox="0 0 22 22" className="h-[22px] w-[22px]" stroke="#1d3f5e" strokeWidth="1.300">
                            <path d="M1.500 5l7-3.500 12 2-7 4z" fill="#fff4c4" />
                            <path d="M1.500 5l12 2.500V20l-12-3.500z" fill="#fbd75c" />
                            <path d="M13.500 7.500l7-4V16l-7 4z" fill="#e0a21c" />
                        </svg>
                    </button>
                </div>
                <Divider />
                <div className="flex w-[140px] flex-col">
                    <button className="flex h-[22px] items-center gap-1 pl-0.5"><Icon name="styles" />Styles</button>
                    <Combo label="Face style" value="Default" className="h-[22px] w-full" />
                    <Combo label="Part style" value="(None)" className="h-[22px] w-full" disabled />
                </div>
            </Group>
            <Group label="Window" width="w-[72px]">
                <BigButton icon="switchWin" lines={["Switch", "Windows"]} width="w-[71px]" caret />
            </Group>
        </div>
    );
}

const treeItems = [
    { name: "Coordinate Systems", icon: "csys", checked: true, expands: true },
    { name: "Reference Planes", icon: "refPlane", checked: false, expands: true },
    { name: "MagSensor Enclosure Lid.par:1", icon: "partPin", checked: true, expands: false },
    { name: "Enclosure2.par:1", icon: "part", checked: true, expands: false },
];

function PathFinder() {
    return (
        <aside className="flex w-[279px] shrink-0 flex-col bg-[#dde1e6] text-black">
            <div className="flex h-[21px] items-center gap-1 bg-[#cfd4dc] pl-[7px] text-[#333]">
                <Icon name="pathfinder" size="h-[18px] w-[18px]" />
                <h2 className="flex-1 text-[12px]">PathFinder</h2>
                <button aria-label="Options" className="flex w-3 flex-col items-center gap-px">
                    <span className="h-0.5 w-2 bg-[#222]" />
                    <svg viewBox="0 0 8 4" className="h-1 w-2"><path d="M0 0h8L4 4z" fill="#222" /></svg>
                </button>
                <button aria-label="Pin" className="flex w-3 justify-center">
                    <svg viewBox="0 0 8 10" className="h-2.5 w-2" fill="none" stroke="#222"><path d="M2 .5h4v5H2zM0 5.500h8M4 6v4M5.500 1v4" /></svg>
                </button>
                <button aria-label="Close pane" className="mr-1.5 flex w-3 justify-center">
                    <svg viewBox="0 0 8 8" className="h-2 w-2" stroke="#222" strokeWidth="1.300"><path d="M0 0l8 8M8 0L0 8" /></svg>
                </button>
            </div>
            <ul className="flex-1 bg-white leading-4">
                <li className="flex h-4 items-center gap-[3px] pl-0.5"><Icon name="asm" />magSEnsorBox Assembly.asm</li>
                {treeItems.map((item) => (
                    <li key={item.name} className="flex h-4 items-center pl-1">
                        <span className="w-[15px]">
                            {item.expands && (
                                <button aria-label={`Expand ${item.name}`} className="flex">
                                    <svg viewBox="0 0 9 9" className="h-[9px] w-[9px]" fill="#f6f6f6" stroke="#8a8f99">
                                        <path d="M.5 .5h8v8h-8z" />
                                        <path d="M2 4.500h5M4.500 2v5" stroke="#111" />
                                    </svg>
                                </button>
                            )}
                        </span>
                        <label className={item.checked ? "flex items-center" : "flex items-center text-[#7c7c7c]"}>
                            <span className="relative flex">
                                <input type="checkbox" defaultChecked={item.checked} className="peer h-[13px] w-[13px] appearance-none border border-[#2a4f74] bg-[#f7f8fa]" />
                                <svg viewBox="0 0 13 13" className="pointer-events-none absolute inset-0 hidden peer-checked:block" fill="none" stroke="#1f3f80" strokeWidth="2">
                                    <path d="M3 6l2.500 3L10 3.500" />
                                </svg>
                            </span>
                            <span className="mr-[3px] ml-1 flex"><Icon name={item.icon} /></span>
                            {item.name}
                        </label>
                    </li>
                ))}
            </ul>
            <p className="mt-1 h-56 bg-white px-4 leading-[14px]">No top level part selected.</p>
        </aside>
    );
}

const TOP = "#a3acb4";
const FRONT = "#8d969c";
const SIDE = "#8a91a3";

function Model() {
    return (
        <svg viewBox="310 144 1583 874" className="h-full w-full" aria-label="Enclosure assembly">
            <defs>
                <linearGradient id="bore">
                    <stop offset="0" stopColor="#8a91a3" />
                    <stop offset=".35" stopColor="#b4b9cb" />
                    <stop offset=".6" stopColor="#a9b0b8" />
                    <stop offset="1" stopColor="#8d969c" />
                </linearGradient>
            </defs>
            {/* floor reflection */}
            <g fill="#000" opacity=".05">
                <path d="M599 906L948 811L1238 977V1018H828L599 955L607 951L599 949z" />
                <path d="M1357 911L1604 978V1018H1238V977z" />
            </g>
            <g stroke="#3b424d" strokeLinejoin="round">
                {/* box */}
                <path d="M599 426L965 216L1604 584L1239 795z" fill={TOP} />
                <path d="M599 426L1239 795V978L599 610z" fill={FRONT} />
                <path d="M1239 795L1604 584V768L1239 978z" fill={SIDE} />
                <path d="M615 426L965 224L1587 584L1239 785z" fill={TOP} />
                <path d="M615 426L625 421L776 508L767 513z" fill={SIDE} />
                <path d="M1577 578L1587 584L1437 671L1428 665z" fill={FRONT} />

                {/* front cutout */}
                <path d="M1057 793L1117 827V871L1057 837z" fill={TOP} />
                <path d="M1057 793L1065 798V832L1057 837z" fill={SIDE} />
                <path d="M1065 832L1117 861" />

                {/* lid edges */}
                <path d="M599 395L1028 642V652L599 405z" fill={FRONT} />
                <path d="M1028 642L1083 611V621L1028 652z" fill={SIDE} />
                <path d="M1083 611L1177 665L1168 670L1083 621z" fill={FRONT} />
                <path d="M1123 697L1239 764V773L1123 707z" fill={FRONT} />
                <path d="M1239 764L1604 553V563L1239 773z" fill={SIDE} />

                {/* lid face */}
                <path d="M964 184L1604 553L1239 764L1123 697L1177 665L1083 611L1028 642L599 395z" fill={TOP} />

                {/* square hole */}
                <path d="M827 306L868 283L901 302L861 326z" fill={SIDE} />
                <path d="M868 283L901 302L893 307L868 293z" fill={FRONT} />
                <path d="M868 293L836 311" />

                {/* round hole */}
                <ellipse cx="775.500" cy="361.500" rx="37" ry="21" fill="url(#bore)" />
                <path d="M740 366C746 356 760 350 776 350S805 356 811 366C806 376 792 382.500 776 382.500S745 376 740 366z" fill={SIDE} />

                {/* main opening */}
                <path d="M828 394L999 296L1409 533L1239 631z" fill={TOP} />
                <path d="M964 325L999 306L1401 538L1409 533L1304 594L964 398z" fill={FRONT} />
                <path d="M838 399L964 325V398L901 436z" fill={SIDE} />
                <path d="M828 394L999 296V306L838 399z" fill={SIDE} />
                <path d="M999 296L1409 533L1401 538L999 306z" fill={FRONT} />

                {/* cutout in the back wall */}
                <path d="M1238 497L1314 539V583L1238 540z" fill={TOP} />
                <path d="M1238 497L1246 501V536L1238 540z" fill={SIDE} />
                <path d="M1246 501L1314 539V573L1246 536z" fill="#949291" />
            </g>
            {/* origin triad */}
            <g fill="none" strokeWidth="3">
                <path d="M1106 540V512" stroke="#0000d8" />
                <path d="M1106 540L1128 528" stroke="#12d812" />
                <path d="M1106 540L1130 554" stroke="#e01010" />
            </g>
            <path d="M1106 501l4 13h-8z" fill="#0000d8" />
            <path d="M1139 521l-9 10-4-7z" fill="#12d812" />
            <path d="M1138 559l-13-3 4-7z" fill="#e01010" />
            <circle cx="1106" cy="540" r="4.500" fill="#f4ee10" />
            <g fontSize="14" textAnchor="middle">
                <text x="1106" y="497" fill="#1818c8">Z</text>
                <text x="1146" y="521" fill="#12d812">Y</text>
                <text x="1146" y="568" fill="#e01010">X</text>
            </g>
        </svg>
    );
}

function ViewCube() {
    return (
        <svg viewBox="0 0 80 88" className="absolute right-6 bottom-[18px] h-[88px] w-20" aria-label="View cube">
            <g stroke="#a9a9a9" strokeWidth="1.200" strokeLinejoin="round">
                <path d="M40 3L76 21L40 42L4 21z" fill="#fbfbfb" />
                <path d="M4 21L40 42V84L7 61z" fill="#f8f8f8" />
                <path d="M76 21L40 42V84L74 61z" fill="#ededed" />
            </g>
            <g fontSize="10" fill="#555" textAnchor="middle">
                <text transform="translate(40 24) rotate(24)">TOP</text>
                <text transform="translate(21 56) rotate(28)">FRONT</text>
                <text transform="translate(60 56) rotate(-28)">RIGHT</text>
            </g>
            <path d="M40 42V24" stroke="#9a90ea" strokeWidth="1.500" />
            <path d="M40 42L56 33" stroke="#7cc890" strokeWidth="1.500" />
            <path d="M40 42L56 51" stroke="#ec8a78" strokeWidth="1.500" />
            <circle cx="40" cy="42" r="2.500" fill="#a8a850" />
        </svg>
    );
}

function StatusBar() {
    const tools = ["repeat", "zoomWin", "zoom", "fitWin", "pan", "orbit", "rotDoc", "viewStyles", "twoCubes"];

    return (
        <footer className="flex h-[23px] items-center border-t border-[#8d9299] bg-linear-to-b from-[#e4e8ec] via-[#cdd3d8] to-[#bcc3c9] text-[#444]">
            <p className="flex-1 truncate pl-[115px]">
                Select components to edit or click the Insert Component command, Create Part In-Place command, Parts Library tab or drag components from Windows Explorer.
            </p>
            <p className="h-full w-[266px] border-x border-[#f2f4f6] text-center leading-[22px]">0 items are selected</p>
            <input
                aria-label="Find a command"
                defaultValue="Find a command"
                className="ml-6 h-full w-[141px] bg-white px-1 text-[12px] font-bold text-black outline-none" />
            <div className="flex items-center gap-1.5 pl-1">
                {tools.map((name) => (
                    <button key={name} aria-label={name}><Icon name={name} /></button>
                ))}
            </div>
            <div className="flex items-center pl-2">
                <button aria-label="Zoom out"><Icon name="minus" /></button>
                <input
                    type="range"
                    aria-label="Zoom"
                    defaultValue="46"
                    className="h-3.5 w-[113px] appearance-none bg-[linear-gradient(#8f979f,#8f979f)] bg-[length:100%_1px] bg-center bg-no-repeat [&::-webkit-slider-thumb]:h-3 [&::-webkit-slider-thumb]:w-2 [&::-webkit-slider-thumb]:appearance-none [&::-webkit-slider-thumb]:rounded-b-sm [&::-webkit-slider-thumb]:border [&::-webkit-slider-thumb]:border-[#4a648f] [&::-webkit-slider-thumb]:bg-[#dfe8f4]" />
                <button aria-label="Zoom in"><Icon name="plus" /></button>
            </div>
            <div className="ml-1 flex h-full items-center border-l border-white px-1"><button aria-label="Record"><Icon name="record" /></button></div>
            <div className="flex h-full items-center border-l border-white pr-0.5 pl-1"><button aria-label="Upload"><Icon name="up" /></button></div>
        </footer>
    );
}

export default function App() {
    return (
        <div className="relative flex h-screen flex-col overflow-hidden bg-white font-['Open_Sans','Noto_Sans',sans-serif] text-[11px]">
            <TitleBar />
            <TabRow />
            <button aria-label="Application menu" className="absolute top-1 left-[3px] h-[38px] w-[38px]">
                <svg viewBox="0 0 38 38">
                    <defs>
                        <linearGradient id="orb" x1="0" y1="0" x2="0" y2="1">
                            <stop offset="0" stopColor="#f8f8f8" />
                            <stop offset=".6" stopColor="#bcc0c4" />
                            <stop offset="1" stopColor="#f4f4f4" />
                        </linearGradient>
                    </defs>
                    <circle cx="19" cy="19" r="18" fill="url(#orb)" stroke="#8c9096" />
                    <path d="M8 15l24-2-13 16z" fill="#2c86dc" />
                    <path d="M11 8l9 10-12-3z" fill="#dfe7ee" stroke="#8a949e" strokeWidth=".7" />
                    <path d="M20 18l12-5-9 9z" fill="#1560b4" />
                    <path d="M20 17l10 9-12 3z" fill="#fff" stroke="#7a94b0" strokeWidth=".6" />
                </svg>
            </button>
            <Ribbon />
            <div className="h-[3px] shrink-0 bg-[#c8ccd5]" />
            <main className="flex min-h-0 flex-1 bg-[#dfe4e9]">
                <div className="w-[27px] shrink-0 pt-1">
                    <button className="flex h-[70px] w-[26px] flex-col items-center gap-1 rounded-r-sm border border-l-0 border-[#b4b9c0] bg-white pt-1.5 text-[12px] text-[#444]">
                        <Icon name="selectPane" size="h-[18px] w-[18px]" />
                        <span className="leading-4 [writing-mode:vertical-rl]">Select</span>
                    </button>
                </div>
                <PathFinder />
                <div className="relative ml-1 min-w-0 flex-1 bg-linear-to-b from-[#404040] to-white">
                    <Model />
                    <ViewCube />
                </div>
                <div className="flex w-[27px] shrink-0 flex-col items-center pt-1">
                    <button className="ml-px flex h-[163px] w-[26px] flex-col items-center gap-1 rounded-l-sm border border-r-0 border-[#b4b9c0] bg-white pt-1 text-[12px] text-[#444]">
                        <Icon name="library" size="h-5 w-5" />
                        <span className="leading-4 [writing-mode:vertical-rl]">Parts Library</span>
                    </button>
                    <div className="flex flex-col gap-3 pt-2">
                        {["family", "layers", "gauge", "folderHelp", "heat", "heatDoc"].map((name) => (
                            <button key={name} aria-label={name}><Icon name={name} size="h-5 w-5" /></button>
                        ))}
                    </div>
                </div>
            </main>
            <StatusBar />
        </div>
    );
}
